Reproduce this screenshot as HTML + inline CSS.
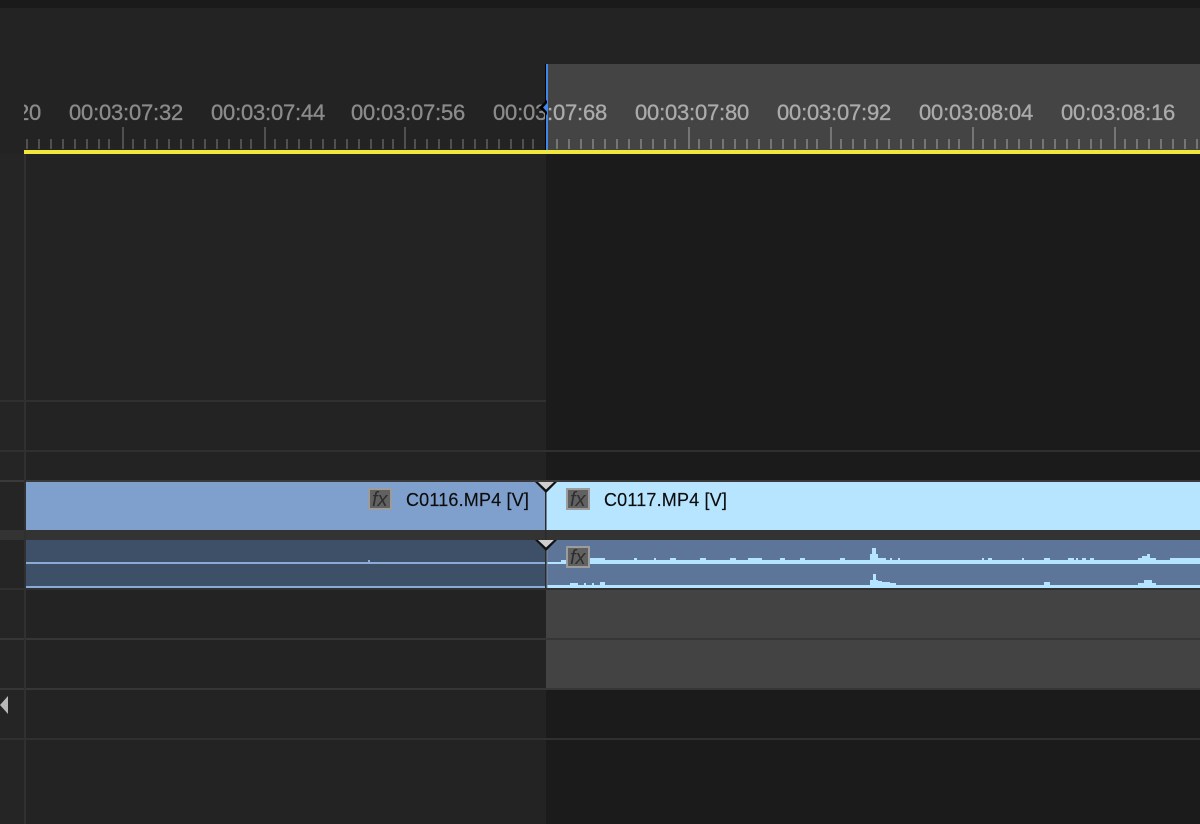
<!DOCTYPE html>
<html><head><meta charset="utf-8"><style>
html,body{margin:0;padding:0;background:#232323}
svg{display:block;font-family:"Liberation Sans",sans-serif}
.t{font-size:22px;letter-spacing:-.2px;stroke-width:.35px}
.c{font-size:18px;letter-spacing:.18px;fill:#0c0c0c;stroke:#0c0c0c;stroke-width:.15px}
.f{font-family:"Liberation Sans",sans-serif;font-style:italic;font-size:20px;fill:#2e2e2e}
</style></head><body>
<svg width="1200" height="824" viewBox="0 0 1200 824" xmlns="http://www.w3.org/2000/svg">
<defs>
<clipPath id="cl"><rect x="24" y="60" width="522" height="90"/></clipPath>
<clipPath id="cr"><rect x="547" y="60" width="653" height="90"/></clipPath>
<g id="tk" fill="currentColor" stroke="none"><path d="M-1 127h2v22h-2zM9 139h2v10H9zM21 139h2v10h-2zM33 139h2v10h-2zM45 139h2v10h-2zM57 139h2v10h-2zM69 139h2v10h-2zM81 139h2v10h-2zM93 139h2v10h-2zM105 139h2v10h-2zM117 139h2v10h-2zM127 139h2v10h-2z"/></g>
<g id="lb">
<text class="t" x="-73" y="120">00:03:07:20</text>
<text class="t" x="69" y="120">00:03:07:32</text>
<text class="t" x="211" y="120">00:03:07:44</text>
<text class="t" x="351" y="120">00:03:07:56</text>
<text class="t" x="493" y="120">00:03:07:68</text>
<text class="t" x="635" y="120">00:03:07:80</text>
<text class="t" x="777" y="120">00:03:07:92</text>
<text class="t" x="919" y="120">00:03:08:04</text>
<text class="t" x="1061" y="120">00:03:08:16</text>
</g>
</defs>
<rect width="1200" height="824" fill="#232323"/>
<rect width="1200" height="8" fill="#1a1a1a"/>
<rect x="546" y="154" width="654" height="670" fill="#1b1b1b"/>
<rect x="546" y="64" width="654" height="86" fill="#444"/>
<rect x="0" y="154" width="24" height="670" fill="#252525"/>
<rect x="546" y="590" width="654" height="98" fill="#434343"/>
<!-- row lines -->
<rect x="0" y="400" width="546" height="2" fill="#303030"/>
<rect x="0" y="450" width="1200" height="2" fill="#303030"/>
<rect x="0" y="480" width="1200" height="2" fill="#3a3a3a"/>
<rect x="0" y="530" width="1200" height="10" fill="#333"/>
<rect x="0" y="588" width="1200" height="2" fill="#303030"/>
<rect x="0" y="638" width="1200" height="2" fill="#363636"/>
<rect x="0" y="688" width="1200" height="2" fill="#363636"/>
<rect x="0" y="738" width="1200" height="2" fill="#303030"/>
<rect x="24" y="154" width="2" height="670" fill="#303030"/>
<!-- ruler -->
<g clip-path="url(#cl)" style="color:#505050" fill="#8b8b8b" stroke="#8b8b8b">
<use href="#lb"/><use href="#tk" x="-19"/><use href="#tk" x="123"/><use href="#tk" x="265"/><use href="#tk" x="405"/>
</g>
<g clip-path="url(#cr)" style="color:#757575" fill="#ababab" stroke="#ababab">
<use href="#lb"/><use href="#tk" x="547"/><use href="#tk" x="689"/><use href="#tk" x="831"/><use href="#tk" x="973"/><use href="#tk" x="1115"/>
</g>
<rect x="24" y="150" width="1176" height="4" fill="#f0e63c"/>
<rect x="545" y="64" width="1" height="86" fill="#000"/>
<rect x="546" y="64" width="2" height="86" fill="#3f86e6"/>
<path d="M547 100L539 107.500L547 115z" fill="#000"/>
<path d="M548 102L543 107.500L548 113z" fill="#3f86e6"/>
<!-- clips -->
<rect x="26" y="482" width="519" height="48" fill="#7f9fcd"/>
<rect x="546" y="482" width="654" height="48" fill="#b7e5ff"/>
<rect x="26" y="540" width="519" height="48" fill="#3e4f68"/>
<rect x="546" y="540" width="654" height="48" fill="#5c7598"/>
<rect x="26" y="562" width="519" height="2" fill="#8caad6"/>
<rect x="26" y="586" width="519" height="2" fill="#8caad6"/>
<rect x="368" y="560" width="2" height="2" fill="#8caad6"/>
<path fill="#b4e4ff" d="M547 562h15v2H547zM561 560h640v4H561zM547 585h654v3H547z
M590 558h15v3h-15zM634 558h3v3h-3zM654 558h2v3h-2zM670 558h6v3h-6zM700 558h6v3h-6zM730 558h6v3h-6zM748 558h14v3h-14zM780 558h5v3h-5zM800 558h5v3h-5zM840 558h5v3h-5z
M870 554h8v7h-8zM872 548h4v6h-4zM878 558h8v3h-8zM890 558h2v3h-2zM898 558h2v3h-2zM982 558h2v2h-2zM988 558h4v2h-4zM1022 558h2v2h-2zM1044 558h6v2h-6zM1068 558h6v3h-6zM1076 558h2v2h-2zM1082 558h4v2h-4zM1090 558h4v2h-4zM1138 558h18v3h-18zM1142 556h8v3h-8zM1147 554h3v3h-3zM1170 558h16v3h-16zM1186 558h14v3h-14z
M570 583h8v3h-8zM600 582h5v4h-5zM584 583h2v2h-2zM592 583h2v2h-2z
M870 580h8v6h-8zM873 574h3v6h-3zM878 581h4v5h-4zM882 582h8v4h-8zM890 583h6v3h-6zM1044 582h6v4h-6zM1138 583h18v3h-18zM1144 580h8v3h-8z"/>
<rect x="545" y="482" width="1.500" height="106" fill="#2b2b2b"/>
<rect x="546.500" y="540" width="1" height="48" fill="#7d8fa8"/>
<path d="M535 482h22l-11 11z" fill="#111"/><path d="M538 482h16l-8 7.500z" fill="#cfcfcf"/>
<path d="M535 540h22l-11 11z" fill="#111"/><path d="M538 540h16l-8 7.500z" fill="#cfcfcf"/>
<!-- fx badges -->
<g fill="#616161" stroke="#9c9c9c" stroke-width="2">
<rect x="369" y="489" width="22" height="20"/><rect x="567" y="489" width="22" height="20"/><rect x="567" y="547" width="22" height="20"/>
</g>
<text class="f" x="372" y="506">fx</text><text class="f" x="570" y="506">fx</text><text class="f" x="570" y="564">fx</text>
<text class="c" x="406" y="506">C0116.MP4 [V]</text>
<text class="c" x="604" y="506">C0117.MP4 [V]</text>
<path d="M0 705L8 696V714z" fill="#b8b8b8"/>
</svg>
</body></html>
